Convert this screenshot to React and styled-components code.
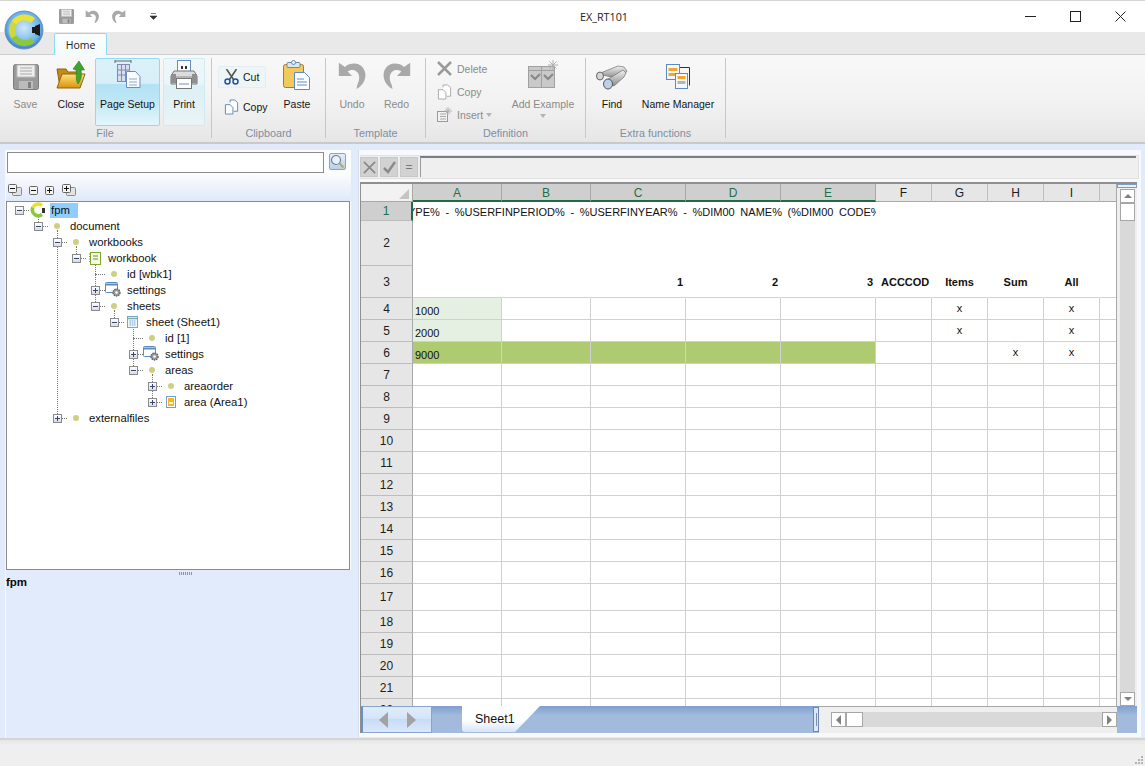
import React from 'react';
import styled, { createGlobalStyle } from 'styled-components';

const Global = createGlobalStyle`
  html, body { margin: 0; padding: 0; background: #f0f0f0; }
  * { box-sizing: border-box; }
  #root { width: 1145px; height: 766px; overflow: hidden; }
`;

const Window = styled.div`
  width: 1145px; height: 766px; display: flex; flex-direction: column;
  font-family: "Liberation Sans", Arial, sans-serif; font-size: 11px; color: #111;
  background: #f0f0f0; overflow: hidden; position: relative;
`;

/* ---------- title bar ---------- */
const TitleBar = styled.div`
  height: 32px; flex: none; background: #fff; display: flex; align-items: center; position: relative;
  border-top: 1px solid #d5d5d5;
`;
const QuickBar = styled.div`
  display: flex; align-items: center; margin-left: 59px; gap: 11px; width: 398px;
`;
const Title = styled.div`
  flex: 1; text-align: center; font-family: "Open Sans", sans-serif; font-size: 10.8px; color: #222; margin-left: -257px; margin-top: -1px;
`;
const WinButtons = styled.div`display: flex; width: 137px; height: 31px; padding-right: 2px;`;
const WinButton = styled.div`width: 45px; display: flex; align-items: center; justify-content: center; margin-top: -1px;`;
const Orb = styled.div`position: absolute; left: 4px; top: 10px; z-index: 3; width: 40px; height: 40px;`;

const TabStrip = styled.div`
  height: 23px; flex: none; background: #e9e9e9; display: flex; align-items: flex-end; padding-left: 54px;
  border-bottom: 1px solid #cdcdcd;
`;
const HomeTab = styled.div`
  width: 53px; height: 22px; margin-bottom: -1px; border: 1px solid #8fdcf0; border-bottom: none; border-radius: 2px 2px 0 0;
  background: linear-gradient(#fafdfe, #f4fbfd); display: flex; align-items: center; justify-content: center;
  font-family: "Open Sans", sans-serif; font-size: 10.5px; color: #222; position: relative; z-index: 1;
`;

/* ---------- ribbon ---------- */
const Ribbon = styled.div`
  height: 89px; flex: none; display: flex; padding-left: 1px;
  background: linear-gradient(#f8f8f8, #f2f2f2 55%, #e6e6e6);
  border-bottom: 2px solid #c9c9c9;
`;
const Group = styled.div`
  width: ${p => p.$w}px; flex: none; display: flex; flex-direction: column; border-right: 1px solid #c8c8c8;
  margin: 3px 0 4px;
`;
const GroupBody = styled.div`flex: 1; display: flex; position: relative; padding-left: ${p => p.$pl || 0}px;`;
const GroupLabel = styled.div`
  height: 17px; text-align: center; font-size: 10.8px; color: #7f8ea3; line-height: 15px; padding-right: ${p => p.$pr || 0}px;
`;
const Big = styled.div`
  width: ${p => p.$w}px; height: 68px; margin-left: ${p => p.$ml || 0}px; flex: none;
  display: flex; flex-direction: column; align-items: center; font-size: 10.5px; white-space: nowrap;
  color: ${p => (p.$off ? '#8b8b8b' : '#151515')};
  border: 1px solid ${p => (p.$hot ? '#8fdcef' : p.$warm ? '#cfeaf2' : 'transparent')}; border-radius: 2px;
  background: ${p => (p.$hot ? 'linear-gradient(#dcf1f9 0, #d6eff8 37%, #b2e2f4 38%, #bce6f5 60%, #e4f6fb 100%)'
    : p.$warm ? 'linear-gradient(#eef7fa 0, #e9f5f9 38%, #dcf0f6 40%, #eaf4f6 100%)' : 'transparent')};
`;
const BigIcon = styled.div`height: 33px; margin-top: -2px; display: flex; align-items: flex-end; justify-content: center;`;
const BigText = styled.div`margin-top: 8px; line-height: 13px;`;
const SmallCol = styled.div`display: flex; flex-direction: column; flex: none; width: ${p => p.$w}px; margin-left: ${p => p.$ml || 0}px; margin-top: ${p => p.$mt || 0}px;`;
const Small = styled.div`
  height: ${p => p.$h || 23}px; display: flex; align-items: center; gap: ${p => p.$gap || 5}px; padding-left: 5px; white-space: nowrap; border-radius: 2px;
  font-size: 10.5px; color: ${p => (p.$off ? '#8b8b8b' : '#151515')};
  border: 1px solid ${p => (p.$warm ? '#e2eef3' : 'transparent')};
  background: ${p => (p.$warm ? '#eef5f7' : 'transparent')};
  margin-top: ${p => p.$mt || 0}px;
  & svg { flex: none; }
`;
const Caret = styled.span`
  width: 0; height: 0; border-left: 3.5px solid transparent; border-right: 3.5px solid transparent; border-top: 4px solid #b4b4b4;
  display: inline-block; margin: ${p => p.$m || '0'};
`;

/* ---------- main ---------- */
const Main = styled.div`
  flex: 1; min-height: 0; display: flex; background: #e1ebfb; padding-top: 6px; border-bottom: 2px solid #d4d4d4;
`;
const LeftPane = styled.div`
  width: 346px; flex: none; margin-left: 5px; display: flex; flex-direction: column;
  background: #fbfcfe; border-left: 1px solid #f6f8fc;
`;
const SearchRow = styled.div`display: flex; align-items: center; height: 23px; padding: 0 0 0 1px; gap: 5px; margin-top: 1px;`;
const SearchBox = styled.div`width: 317px; height: 21px; border: 1px solid #8b8b8b; background: #fff; flex: none;`;
const SearchBtn = styled.div`width: 17px; height: 17px; border: 1px solid #8ba4c4; border-radius: 2px; background: linear-gradient(#e5eefa, #b9cfe9); display: flex; align-items: center; justify-content: center; margin-top: -2px; flex: none;`;
const TreeTools = styled.div`
  height: 27px; display: flex; align-items: center; padding: 5px 0 0 2px; gap: 7px;
  background: linear-gradient(#fbfcfe, #dfe9f8);
`;
const Tool = styled.div`display: flex; margin-right: ${p => p.$mr || 0}px;`;
const Tree = styled.div`
  width: 344px; height: 369px; flex: none; background: #fff; border: 1px solid #8a8a8a; position: relative;
`;
const TreeRow = styled.div`
  height: 16px; display: flex; align-items: center; padding-left: ${p => p.$depth * 19 + 8}px; position: relative;
  font-size: 11.3px; color: #111; white-space: nowrap;
`;
const Expander = styled.div`
  width: 9px; height: 9px; flex: none; border: 1px solid #8a8a8a; background: linear-gradient(#fff, #dcdcdc); position: relative;
  &::before { content: ''; position: absolute; left: 1px; right: 1px; top: 3px; height: 1px; background: #35467e; }
  &::after { content: ''; display: ${p => (p.$plus ? 'block' : 'none')}; position: absolute; top: 1px; bottom: 1px; left: 3px; width: 1px; background: #35467e; }
`;
const Stub = styled.div`width: ${p => p.$w || 5}px; height: 0; flex: none; border-top: 1px dotted #777; margin-left: ${p => p.$ml || 0}px;`;
const NodeIcon = styled.div`width: 17px; height: 16px; flex: none; display: flex; align-items: center; justify-content: center; margin-right: 4px;`;
const Dot = styled.div`width: 6px; height: 6px; border-radius: 50%; background: #cfcf83;`;
const NodeLabel = styled.span`
  padding: 0 1px; line-height: 15px; background: ${p => (p.$sel ? '#8fcdfc' : 'transparent')};
  ${p => (p.$sel ? 'width: 28px;' : '')}
`;
const VLine = styled.div`
  position: absolute; left: ${p => p.$x}px; top: ${p => p.$y}px; height: ${p => p.$h}px; border-left: 1px dotted #777;
`;
const Grip = styled.div`
  height: 5px; flex: none; display: flex; justify-content: center; padding: 2px 0 0 13px; width: 345px;
  background: #e1ebfb;
  & > div { width: 13px; height: 3px; background: repeating-linear-gradient(90deg, #8a93a3 0 1px, transparent 1px 2px); }
`;
const Details = styled.div`
  flex: 1; background: #e1ebfb; padding: 1px 0 0 0; font-weight: 700; font-size: 11.5px; color: #0a0a0a;
`;

const RightPane = styled.div`
  width: 783px; flex: none; margin-left: 7px; background: #f7f9fc; padding: 4px 2px 4px 1px; display: flex; flex-direction: column;
  border-left: 1px solid #d5ddea; height: 587px;
`;
const FormulaBar = styled.div`
  height: 24px; flex: none; display: flex; gap: 2px; margin-top: 1px; background: #efefef; border: 1px solid #e2e2e2; border-left: none;
`;
const FBtn = styled.div`width: 18px; height: 20px; margin-top: 1px; background: #d2d2d2; border: 1px solid #c8c8c8; display: flex; align-items: center; justify-content: center; color: #777; font-size: 12px; flex: none;`;
const FInput = styled.div`flex: 1; margin: 0 2px 0 0; height: 21px; border-top: 2px solid #7d7d7d; border-left: 1px solid #9a9a9a; background: #efefef;`;

const SheetFrame = styled.div`
  margin-top: 3px; width: 777px; height: 551px; flex: none; display: flex; flex-direction: column; border-top: 2px solid #8f8f8f; border-left: 1px solid #8f8f8f; background: #efefef; position: relative;
`;
const SheetBody = styled.div`flex: 1; min-height: 0; display: flex;`;
const GridWrap = styled.div`
  width: 756px; flex: none; overflow: hidden; border-right: 1px solid #a8a8a8;
`;
const GridEl = styled.div`
  display: grid;
  grid-template-columns: 52px 89px 89px 95px 95px 95px 56px 56px 56px 56px 40px;
  grid-template-rows: 18px 19px 45px 32px repeat(13, 22px) 27px repeat(4, 22px) 22px;
`;
const Corner = styled.div`
  background: #f2f2f2; border-right: 1px solid #a8a8a8; border-bottom: 1px solid #a8a8a8; position: relative;
  &::after { content: ''; position: absolute; right: 3px; bottom: 2px; width: 0; height: 0; border-left: 10px solid transparent; border-bottom: 10px solid #c4c4c4; }
`;
const ColHead = styled.div`
  display: flex; align-items: center; justify-content: center; font-size: 12px; padding-top: 1px;
  background: ${p => (p.$on ? '#cfcfcf' : '#e6e6e6')}; color: ${p => (p.$on ? '#1f6f4a' : '#1d1d1d')};
  border-right: 1px solid ${p => (p.$on ? '#a8a8a8' : '#bdbdbd')};
  border-bottom: ${p => (p.$on ? '2px solid #1f6b45' : '1px solid #a8a8a8')};
`;
const RowHead = styled.div`
  display: flex; align-items: center; justify-content: center; font-size: 12px;
  background: ${p => (p.$on ? '#cfcfcf' : '#e6e6e6')}; color: ${p => (p.$on ? '#1f6f4a' : '#1d1d1d')};
  border-right: ${p => (p.$on ? '2px solid #1f6b45' : '1px solid #a8a8a8')}; border-bottom: 1px solid #bdbdbd;
`;
const Cell = styled.div`
  background: ${p => p.$bg || '#fff'};
  border-right: 1px solid ${p => (p.$noLines ? (p.$bg || '#fff') : '#d0d0d0')}; border-bottom: 1px solid #d0d0d0;
  display: flex; align-items: center;
  justify-content: ${p => (p.$align === 'r' ? 'flex-end' : p.$align === 'c' ? 'center' : 'flex-start')};
  font-size: 11px; font-weight: ${p => (p.$bold ? 700 : 400)}; white-space: nowrap; padding: ${p => p.$pad || '0 2px'};
`;
const TitleCell = styled.div`
  grid-column: 2 / span 5; background: #fff; overflow: hidden; font-size: 11px; white-space: nowrap; display: flex; align-items: center;
  word-spacing: 2.6px;
  & > span { margin-left: -5px; }
`;
const BlankSpan = styled.div`grid-column: ${p => p.$col}; background: #fff;`;

const VScroll = styled.div`
  width: 20px; flex: none; display: flex; flex-direction: column; padding: 0 2px 0 3px; position: relative; background: #efefef;
`;
const VTrack = styled.div`flex: 1; background: linear-gradient(#efefef 5px, #d9d9d9 5px); display: flex; flex-direction: column;`;
const ScrollBtn = styled.div`
  width: ${p => p.$w || 15}px; height: ${p => p.$h || 15}px; background: #fff; border: 1px solid #a6a6a6; display: flex; align-items: center; justify-content: center; flex: none;
  margin-top: ${p => p.$mt || 0}px;
`;
const TrackGap = styled.div`flex: 1;`;
const Tri = styled.div`
  width: 0; height: 0;
  ${p => p.$d === 'up' && 'border-left:4px solid transparent;border-right:4px solid transparent;border-bottom:4px solid #808080;'}
  ${p => p.$d === 'down' && 'border-left:4px solid transparent;border-right:4px solid transparent;border-top:4px solid #808080;'}
  ${p => p.$d === 'left' && 'border-top:5px solid transparent;border-bottom:5px solid transparent;border-right:5px solid #808080;'}
  ${p => p.$d === 'right' && 'border-top:5px solid transparent;border-bottom:5px solid transparent;border-left:5px solid #808080;'}
`;
const SplitMark = styled.div`position: absolute; left: 0; top: 0; width: 20px; height: 4px; border: 1px solid #7f9cc4; background: #eaf1fb; z-index: 2;`;
const TabBar = styled.div`
  height: 27px; flex: none; display: flex; background: linear-gradient(#7f9fcf, #a2bbdd 35%, #a2bbdd);
`;
const TabNav = styled.div`
  width: 71px; height: 27px; flex: none; border: 1px solid #88a4cf; border-left: 2px solid #6f8fc0; background: linear-gradient(#dfecfb, #d5e5f9 45%, #c8dbf5 50%, #dbe8fb);
  display: flex; align-items: center; justify-content: space-around; padding: 0 6px;
`;
const NavArrow = styled.div`
  width: 0; height: 0; border-top: 8px solid transparent; border-bottom: 8px solid transparent;
  ${p => (p.$r ? 'border-left: 9px solid #a3a3a3;' : 'border-right: 9px solid #a3a3a3;')}
`;
const SheetTab = styled.div`
  margin-left: 30px; width: 53px; height: 26px; padding-left: 13px; display: flex; align-items: center; font-size: 12.5px; color: #111;
  position: relative; background: linear-gradient(#fff, #fff 55%, #d6e3f8); border-bottom-left-radius: 3px; flex: none;
  & > svg { position: absolute; left: 53px; top: 0; }
`;
const TabFill = styled.div`flex: 1;`;
const Splitter = styled.div`
  width: 6px; height: 25px; margin-top: 1px; flex: none; background: #dbe6f6; border: 1px solid #6a87b0; position: relative;
  &::after { content: ''; position: absolute; left: 2px; top: 5px; bottom: 5px; width: 1px; background: #7f8ea3; }
`;
const HScroll = styled.div`
  width: 298px; flex: none; height: 27px; background: #efefef; display: flex; padding: 5px 0 0 12px; border-top: 1px solid #a8a8a8;
`;
const HTrack = styled.div`flex: 1; height: 15px; background: #d9d9d9; display: flex; justify-content: space-between;`;
const HLeft = styled.div`display: flex;`;
const ScrollCorner = styled.div`width: 20px; flex: none;`;
const ResizeGrip = styled.div`
  position: absolute; right: 2px; bottom: 2px; display: grid; grid-template-columns: repeat(3, 2px); grid-auto-rows: 2px; gap: 1px;
  & > i { background: #b4b4b4; }
`;
const StatusBar = styled.div`
  height: 26px; flex: none; background: linear-gradient(#e6e6e6 0, #efefef 5px);
`;

/* ---------- icons ---------- */
const Floppy = ({ s = 26, c = '#9a9a9a' }) => (
  <svg width={s} height={s} viewBox="0 0 26 26">
    <rect x=".5" y=".5" width="25" height="25" rx="2" fill={c} stroke="#7d7d7d" />
    <rect x="4" y="1" width="18" height="12" fill="#eee" stroke="#bbb" />
    <path d="M7 4h12M7 7h12M7 10h12" stroke="#aaa" />
    <rect x="6" y="17" width="14" height="8" fill="#bcbcbc" />
    <rect x="15" y="18" width="3" height="6" fill="#808080" />
  </svg>
);
const FolderIcon = () => (
  <svg width="30" height="30" viewBox="0 0 30 30">
    <defs><linearGradient id="fg" x1="0" y1="0" x2="0" y2="1"><stop offset="0" stopColor="#ffe17a" /><stop offset="1" stopColor="#d8930b" /></linearGradient></defs>
    <path d="M1 9h9l2 3h12v15H4z" fill="#c58a12" stroke="#8f6410" />
    <path d="M6 14h23l-5 14H1z" fill="url(#fg)" stroke="#8f6410" />
    <path d="M22 24c3-4 4-8 3-14h3.500L23 1l-6 8 3 1c1 5-1 9 2 14z" fill="#3fa32d" stroke="#2b7d1f" strokeWidth=".6" />
  </svg>
);
const PageSetupIcon = () => (
  <svg width="28" height="30" viewBox="0 0 28 30">
    <path d="M1 1h16M1 0v3M17 0v3" stroke="#667" fill="none" />
    <rect x="3.5" y="4.5" width="12" height="17" fill="#d8def0" stroke="#7f8bb0" />
    <path d="M3.5 10h12M3.5 15h12M7.5 4.5v17M11.5 4.5v17" stroke="#7f8bb0" />
    <path d="M12.5 11.5h9l4.5 5v11h-13.500z" fill="#fafcff" stroke="#6b8cc0" />
    <path d="M15 19h8M15 22h8M15 25h8" stroke="#8fa8cf" />
  </svg>
);
const PrinterIcon = () => (
  <svg width="28" height="30" viewBox="0 0 28 30">
    <rect x="7.500" y=".5" width="13" height="14" fill="#f7f9fd" stroke="#6a8cc0" />
    <path d="M11 6h2v3h-2zM15 6h2v3h-2z" fill="#333" />
    <path d="M4 11h20l3 5v8H1v-8z" fill="#dcdcdc" stroke="#777" />
    <path d="M2 16h24v7H2z" fill="#b5b5b5" />
    <rect x="1" y="14" width="5" height="9" fill="#8f8f8f" />
    <rect x="22" y="14" width="5" height="9" fill="#8f8f8f" />
    <rect x="6.500" y="18.500" width="15" height="10" fill="#fff" stroke="#777" />
    <path d="M9 24h10" stroke="#6a8cc0" />
  </svg>
);
const Scissors = () => (
  <svg width="15" height="16" viewBox="0 0 15 16">
    <path d="M2.500 0l7 10.500M12.500 0l-7 10.500" stroke="#555" strokeWidth="1.600" />
    <circle cx="3.500" cy="12.500" r="2.500" fill="none" stroke="#24509a" strokeWidth="1.500" />
    <circle cx="11.500" cy="12.500" r="2.500" fill="none" stroke="#24509a" strokeWidth="1.500" />
  </svg>
);
const CopyIcon = ({ c = '#5b86bd' }) => (
  <svg width="15" height="16" viewBox="0 0 16 16">
    <path d="M6.500 3V.5h5l3 3v9h-4" fill="#fff" stroke={c} />
    <path d="M1.500 5.500h5l3 3v7h-8z" fill="#fff" stroke={c} />
  </svg>
);
const PasteIcon = () => (
  <svg width="28" height="30" viewBox="0 0 28 30">
    <rect x=".5" y="4.500" width="20" height="23" rx="2" fill="#f3c95c" stroke="#a77d23" />
    <rect x="4" y="2.500" width="13" height="5" rx="1" fill="#dbe6f2" stroke="#6f8aa8" />
    <circle cx="10.500" cy="2.500" r="2" fill="#eaf2f9" stroke="#6f8aa8" />
    <path d="M11.500 12.500h10l5 5v12h-15z" fill="#fff" stroke="#5e8ac2" />
    <path d="M14 19h7M14 22h10M14 25h10" stroke="#5e8ac2" />
  </svg>
);
const UndoIcon = ({ flip }) => (
  <svg width="31" height="30" viewBox="0 0 31 34" style={flip ? { transform: 'scaleX(-1)' } : undefined}>
    <path d="M0 3v15h15l-5-5c3-2 7-2.500 10 0 4 3 4 9 1 15l-1 5c7-4 11-11 10-18-1-6-6-11-12-11-5 0-8 1-11 4z" fill="#a9a9a9" />
  </svg>
);
const XIcon = ({ s = 15, c = '#9a9a9a', w = 2.500 }) => (
  <svg width={s} height={s} viewBox="0 0 15 15"><path d="M1 1l13 13M14 1L1 14" stroke={c} strokeWidth={w} /></svg>
);
const InsertIcon = () => (
  <svg width="15" height="15" viewBox="0 0 15 15">
    <rect x=".5" y="4.500" width="10" height="10" fill="#f2f2f2" stroke="#999" />
    <path d="M3 7h6M3 9.500h6M3 12h6" stroke="#a8a8a8" />
    <path d="M11 0v8M7 4h8M8.500 1.500l5 5M13.500 1.500l-5 5" stroke="#b4b4b4" />
  </svg>
);
const AddExampleIcon = () => (
  <svg width="30" height="30" viewBox="0 0 30 30">
    <rect x=".5" y="6.500" width="13" height="21" fill="#c9c9c9" stroke="#a0a0a0" />
    <rect x="13.500" y="6.500" width="13" height="21" fill="#c9c9c9" stroke="#a0a0a0" />
    <path d="M.5 10.500h26" stroke="#a0a0a0" />
    <path d="M3 15l4 4 5-5M16 15l4 4 5-5" fill="none" stroke="#888" strokeWidth="2" />
    <path d="M25 0v10M20 5h10M21.500 1.500l7 7M28.500 1.500l-7 7" stroke="#b0b0b0" />
  </svg>
);
const BinocularsIcon = () => (
  <svg width="32" height="26" viewBox="0 0 32 26">
    <defs><linearGradient id="bn" x1="0" y1="0" x2="0" y2="1"><stop offset="0" stopColor="#f2f2f2" /><stop offset="1" stopColor="#8b8b8b" /></linearGradient></defs>
    <path d="M2 10L22 2l6 1 3 4-3 4-8 3z" fill="url(#bn)" stroke="#707070" strokeWidth=".7" />
    <path d="M9 17L27 6l3 3-2 4-10 9z" fill="url(#bn)" stroke="#707070" strokeWidth=".7" />
    <ellipse cx="4" cy="12" rx="3.500" ry="4" fill="#d5d5d5" stroke="#666" />
    <ellipse cx="12" cy="20" rx="4.500" ry="5" fill="#bcd0ea" stroke="#555" />
  </svg>
);
const NameMgrIcon = () => (
  <svg width="25" height="26" viewBox="0 0 25 26">
    <rect x=".5" y=".5" width="13" height="15" fill="#f4f8fd" stroke="#5e8ac2" />
    <rect x="2.500" y="4" width="9" height="3" fill="#f2a62c" />
    <rect x="2.500" y="9" width="9" height="3" fill="#f2a62c" />
    <path d="M14 3.500h9.500v18" fill="none" stroke="#333" />
    <rect x="9.500" y="9.500" width="12" height="15" fill="#f4f8fd" stroke="#5e8ac2" />
    <rect x="11.500" y="12" width="8" height="3" fill="#f2a62c" />
    <rect x="11.500" y="17" width="8" height="3" fill="#b5b5b5" />
  </svg>
);
const LogoOrb = () => (
  <svg width="40" height="40" viewBox="0 0 40 40">
    <defs>
      <radialGradient id="orb" cx=".5" cy=".45" r=".6"><stop offset="0" stopColor="#cfe9fa" /><stop offset=".7" stopColor="#6ab2ea" /><stop offset="1" stopColor="#1b63b8" /></radialGradient>
    </defs>
    <circle cx="20" cy="20" r="19" fill="url(#orb)" stroke="#6d8fb6" />
    <path d="M29 10.500a13 13 0 0 0-19 2.500" fill="none" stroke="#e8e23a" strokeWidth="6" />
    <path d="M10 13a13 13 0 0 0 0 14" fill="none" stroke="#cfd83a" strokeWidth="6" />
    <path d="M10 27a13 13 0 0 0 19 3" fill="none" stroke="#8dc63f" strokeWidth="6" />
    <path d="M36 14v12l-5-2v-8z" fill="#1a1a1a" />
    <rect x="28" y="17" width="4" height="6" fill="#1a1a1a" />
  </svg>
);
const MiniLogo = () => (
  <svg width="16" height="16" viewBox="0 0 16 16">
    <path d="M12 3.500A6 6 0 0 0 2.800 5.500" fill="none" stroke="#ecdf2b" strokeWidth="3.500" />
    <path d="M2.800 5.500a6 6 0 0 0 9.200 7" fill="none" stroke="#8dc63f" strokeWidth="3.500" />
    <rect x="12" y="6" width="3" height="5" fill="#333" />
  </svg>
);
const BookIcon = () => (
  <svg width="12" height="13" viewBox="0 0 12 13">
    <rect x="1.500" y=".5" width="10" height="12" fill="#f5f9e8" stroke="#7fa82f" />
    <path d="M4 4h5M4 7h5" stroke="#6a8f2a" />
    <path d="M0 2h2M0 4.500h2M0 7h2M0 9.500h2" stroke="#7fa82f" />
  </svg>
);
const SettingsIcon = () => (
  <svg width="17" height="16" viewBox="0 0 17 16">
    <rect x=".5" y=".5" width="12" height="10" rx="1" fill="#fff" stroke="#5e8ac2" />
    <path d="M1 2.500h11" stroke="#5e8ac2" strokeWidth="2" />
    <circle cx="11.500" cy="10.500" r="3.500" fill="#9a9a9a" stroke="#666" strokeDasharray="1.500 .8" strokeWidth="1.400" />
    <circle cx="11.500" cy="10.500" r="1.200" fill="#fff" />
  </svg>
);
const SheetIcon = () => (
  <svg width="11" height="12" viewBox="0 0 11 12">
    <rect x=".5" y=".5" width="10" height="11" fill="#f0f6fd" stroke="#7ba3d3" />
    <path d="M1 2.500h9" stroke="#7fb0a0" strokeWidth="1.500" />
    <path d="M2.500 5h6M2.500 7h6M2.500 9h6" stroke="#7ba3d3" strokeDasharray="1.500 .7" />
  </svg>
);
const AreaIcon = () => (
  <svg width="10" height="12" viewBox="0 0 10 12">
    <rect x=".5" y=".5" width="9" height="11" fill="#fff" stroke="#7a9cc6" />
    <rect x="2" y="2" width="6" height="8" fill="#f5b81f" />
    <rect x="3" y="6" width="4" height="2" fill="#fff4cf" />
  </svg>
);
const ToolIcon = ({ plus, double }) => (
  <svg width={double ? 14 : 9} height={double ? 12 : 9} viewBox={double ? '0 0 14 12' : '0 0 9 9'}>
    {double && <rect x="4.500" y="3.500" width="9" height="8" rx="1" fill="#e3e3e3" stroke="#8a8a8a" />}
    <rect x=".5" y=".5" width="8" height="8" rx="1" fill="#f4f4f4" stroke="#666" />
    <path d="M2 4.500h5" stroke="#111" />
    {plus && <path d="M4.500 2v5" stroke="#111" />}
  </svg>
);
const Magnifier = () => (
  <svg width="15" height="15" viewBox="0 0 15 15">
    <circle cx="6" cy="6" r="4.500" fill="#e8f2fb" stroke="#6b7f96" strokeWidth="1.200" />
    <path d="M9.500 9.500l4 4" stroke="#c8a44a" strokeWidth="2" />
  </svg>
);
const ARROW = 'M0 3v15h15l-5-5c3-2 7-2.500 10 0 4 3 4 9 1 15l-1 5c7-4 11-11 10-18-1-6-6-11-12-11-5 0-8 1-11 4z';

/* ---------- data ---------- */
const columns = ['A', 'B', 'C', 'D', 'E', 'F', 'G', 'H', 'I', ''];
const rowNumbers = Array.from({ length: 22 }, (_, i) => i + 1);

const treeRows = [
  { d: 0, exp: 'minus', icon: <MiniLogo />, label: 'fpm', sel: true },
  { d: 1, exp: 'minus', dot: true, label: 'document' },
  { d: 2, exp: 'minus', dot: true, label: 'workbooks' },
  { d: 3, exp: 'minus', icon: <BookIcon />, label: 'workbook' },
  { d: 4, leaf: true, dot: true, label: 'id [wbk1]' },
  { d: 4, exp: 'plus', icon: <SettingsIcon />, label: 'settings' },
  { d: 4, exp: 'minus', dot: true, label: 'sheets' },
  { d: 5, exp: 'minus', icon: <SheetIcon />, label: 'sheet (Sheet1)' },
  { d: 6, leaf: true, dot: true, label: 'id [1]' },
  { d: 6, exp: 'plus', icon: <SettingsIcon />, label: 'settings' },
  { d: 6, exp: 'minus', dot: true, label: 'areas' },
  { d: 7, exp: 'plus', dot: true, label: 'areaorder' },
  { d: 7, exp: 'plus', icon: <AreaIcon />, label: 'area (Area1)' },
  { d: 2, exp: 'plus', dot: true, label: 'externalfiles' },
];
const treeLines = [
  [31, 13, 7], [50, 28, 184], [69, 44, 8], [88, 60, 40], [107, 108, 8], [126, 124, 40], [145, 172, 24],
];

const row3 = { 2: '1', 3: '2', 4: '3', 5: 'ACCCOD', 6: 'Items', 7: 'Sum', 8: 'All' };
const marks = {
  4: { 6: 'x', 8: 'x' },
  5: { 6: 'x', 8: 'x' },
  6: { 7: 'x', 8: 'x' },
};
const aValues = { 4: '1000', 5: '2000', 6: '9000' };

function row3Cell(c) {
  const num = c >= 2 && c <= 4;
  const left = c === 5;
  return (
    <Cell key={`3-${c}`} $bold $noLines $align={num ? 'r' : left ? undefined : 'c'} $pad={num ? '0 2px 0 0' : left ? '0 0 0 5px' : '0'}>
      {row3[c]}
    </Cell>
  );
}

function SheetGrid() {
  const cells = [<Corner key="corner" />];
  columns.forEach((c, i) => cells.push(<ColHead key={`h${i}`} $on={i < 5}>{c}</ColHead>));
  rowNumbers.forEach(r => {
    cells.push(<RowHead key={`r${r}`} $on={r === 1}>{r}</RowHead>);
    if (r === 1) {
      cells.push(
        <TitleCell key="title"><span>YPE% - %USERFINPERIOD% - %USERFINYEAR% - %DIM00 NAME% (%DIM00 CODE%</span></TitleCell>,
        <BlankSpan key="b1" $col="span 5" />
      );
    } else if (r === 2) {
      cells.push(<BlankSpan key="b2" $col="span 10" />);
    } else if (r === 3) {
      for (let c = 0; c < 10; c++) cells.push(row3Cell(c));
    } else {
      for (let c = 0; c < 10; c++) {
        const tint = c < 5 ? (r === 6 ? '#aecb71' : c === 0 && (r === 4 || r === 5) ? '#e6f0e2' : undefined) : undefined;
        const isA = c === 0 && aValues[r];
        const mk = marks[r]?.[c];
        cells.push(
          <Cell key={`${r}-${c}`} $bg={tint} $align={mk ? 'c' : undefined} $pad={isA ? '4px 0 0 2px' : '0 0 2px'}>
            {isA || mk}
          </Cell>
        );
      }
    }
  });
  return <GridEl>{cells}</GridEl>;
}

function TreeNode({ n }) {
  return (
    <TreeRow $depth={n.d}>
      {n.leaf ? <Stub $w={10} $ml={4} /> : <><Expander $plus={n.exp === 'plus'} /><Stub /></>}
      <NodeIcon>{n.dot ? <Dot /> : n.icon}</NodeIcon>
      <NodeLabel $sel={n.sel}>{n.label}</NodeLabel>
    </TreeRow>
  );
}

export default function App() {
  return (
    <Window>
      <Global />
      <Orb><LogoOrb /></Orb>
      <TitleBar>
        <QuickBar>
          <Floppy s={15} />
          <svg width="15" height="15" viewBox="0 0 31 34"><path d={ARROW} fill="#a9a9a9" /></svg>
          <svg width="15" height="15" viewBox="0 0 31 34" style={{ transform: 'scaleX(-1)', marginLeft: 0 }}><path d={ARROW} fill="#a9a9a9" /></svg>
          <svg width="7" height="7" viewBox="0 0 7 7" style={{ marginLeft: 13 }}><path d="M1 .5h5M0 3h7L3.500 6.500z" stroke="#333" fill="#333" strokeWidth=".6" /></svg>
        </QuickBar>
        <Title>EX_RT101</Title>
        <WinButtons>
          <WinButton><svg width="11" height="11" viewBox="0 0 11 11"><path d="M0 5.500h11" stroke="#222" /></svg></WinButton>
          <WinButton><svg width="11" height="11" viewBox="0 0 11 11"><rect x=".5" y=".5" width="10" height="10" fill="none" stroke="#222" /></svg></WinButton>
          <WinButton><svg width="11" height="11" viewBox="0 0 11 11"><path d="M.5.5l10 10M10.500.5l-10 10" stroke="#222" /></svg></WinButton>
        </WinButtons>
      </TitleBar>
      <TabStrip><HomeTab>Home</HomeTab></TabStrip>
      <Ribbon>
        <Group $w={211}>
          <GroupBody>
            <Big $w={49} $off><BigIcon><Floppy /></BigIcon><BigText>Save</BigText></Big>
            <Big $w={42}><BigIcon><FolderIcon /></BigIcon><BigText>Close</BigText></Big>
            <Big $w={65} $hot $ml={3}><BigIcon><PageSetupIcon /></BigIcon><BigText>Page Setup</BigText></Big>
            <Big $w={42} $warm $ml={3}><BigIcon><PrinterIcon /></BigIcon><BigText>Print</BigText></Big>
          </GroupBody>
          <GroupLabel $pr={2}>File</GroupLabel>
        </Group>
        <Group $w={114}>
          <GroupBody>
            <SmallCol $w={48} $ml={6}>
              <Small $warm $mt={8} $h={22} $gap={4}><Scissors />Cut</Small>
              <Small $mt={7} $gap={4}><CopyIcon />Copy</Small>
            </SmallCol>
            <Big $w={38} $ml={12}><BigIcon><PasteIcon /></BigIcon><BigText>Paste</BigText></Big>
          </GroupBody>
          <GroupLabel>Clipboard</GroupLabel>
        </Group>
        <Group $w={100}>
          <GroupBody $pl={4}>
            <Big $w={44} $off><BigIcon><UndoIcon /></BigIcon><BigText>Undo</BigText></Big>
            <Big $w={45} $off><BigIcon><UndoIcon flip /></BigIcon><BigText>Redo</BigText></Big>
          </GroupBody>
          <GroupLabel>Template</GroupLabel>
        </Group>
        <Group $w={160}>
          <GroupBody>
            <SmallCol $w={72} $ml={5} $mt={-1}>
              <Small $off><XIcon />Delete</Small>
              <Small $off><CopyIcon c="#a8a8a8" />Copy</Small>
              <Small $off><InsertIcon />Insert<Caret $m="0 0 0 -2px" /></Small>
            </SmallCol>
            <Big $w={72} $off $ml={4}><BigIcon><AddExampleIcon /></BigIcon><BigText>Add Example</BigText><Caret $m="3px 0 0" /></Big>
          </GroupBody>
          <GroupLabel>Definition</GroupLabel>
        </Group>
        <Group $w={140}>
          <GroupBody $pl={4}>
            <Big $w={44}><BigIcon><BinocularsIcon /></BigIcon><BigText>Find</BigText></Big>
            <Big $w={80} $ml={4}><BigIcon><NameMgrIcon /></BigIcon><BigText>Name Manager</BigText></Big>
          </GroupBody>
          <GroupLabel>Extra functions</GroupLabel>
        </Group>
      </Ribbon>
      <Main>
        <LeftPane>
          <SearchRow>
            <SearchBox />
            <SearchBtn><Magnifier /></SearchBtn>
          </SearchRow>
          <TreeTools>
            <Tool><ToolIcon double /></Tool>
            <Tool><ToolIcon /></Tool>
            <Tool $mr={1}><ToolIcon plus /></Tool>
            <Tool><ToolIcon plus double /></Tool>
          </TreeTools>
          <Tree>
            {treeLines.map(([x, y, h]) => <VLine key={x} $x={x} $y={y} $h={h} />)}
            {treeRows.map((n, i) => <TreeNode key={i} n={n} />)}
          </Tree>
          <Grip><div /></Grip>
          <Details>fpm</Details>
        </LeftPane>
        <RightPane>
          <FormulaBar>
            <FBtn><XIcon s={13} c="#8b8b8b" w={2} /></FBtn>
            <FBtn><svg width="13" height="13" viewBox="0 0 13 13"><path d="M1 7l4 4 7-10" fill="none" stroke="#8b8b8b" strokeWidth="2.500" /></svg></FBtn>
            <FBtn>=</FBtn>
            <FInput />
          </FormulaBar>
          <SheetFrame>
            <SheetBody>
              <GridWrap><SheetGrid /></GridWrap>
              <VScroll>
                <SplitMark />
                <VTrack>
                  <ScrollBtn $w={15} $h={14} $mt={5}><Tri $d="up" /></ScrollBtn>
                  <ScrollBtn $w={15} $h={18} />
                  <TrackGap />
                  <ScrollBtn $w={15} $h={14}><Tri $d="down" /></ScrollBtn>
                </VTrack>
              </VScroll>
            </SheetBody>
            <TabBar>
              <TabNav><NavArrow /><NavArrow $r /></TabNav>
              <SheetTab>Sheet1
                <svg width="26" height="26" viewBox="0 0 26 26">
                  <defs><linearGradient id="stab" x1="0" y1="0" x2="0" y2="1"><stop offset=".55" stopColor="#fff" /><stop offset="1" stopColor="#d6e3f8" /></linearGradient></defs>
                  <path d="M0 26L25 0H0z" fill="url(#stab)" />
                </svg>
              </SheetTab>
              <TabFill />
              <Splitter />
              <HScroll>
                <HTrack>
                  <HLeft>
                    <ScrollBtn $w={15} $h={15}><Tri $d="left" /></ScrollBtn>
                    <ScrollBtn $w={17} $h={15} />
                  </HLeft>
                  <ScrollBtn $w={15} $h={15}><Tri $d="right" /></ScrollBtn>
                </HTrack>
              </HScroll>
              <ScrollCorner />
            </TabBar>
          </SheetFrame>
        </RightPane>
      </Main>
      <StatusBar />
      <ResizeGrip>
        <i style={{ gridColumn: 3 }} />
        <i style={{ gridColumn: 2 }} /><i />
        <i /><i /><i />
      </ResizeGrip>
    </Window>
  );
}
